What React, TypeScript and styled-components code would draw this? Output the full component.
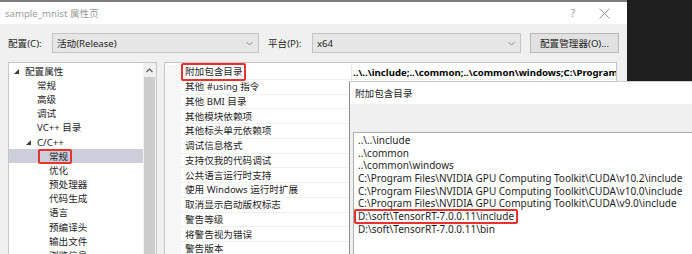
import React from "react";
import styled, { createGlobalStyle } from "styled-components";

const GlobalStyle = createGlobalStyle`
  html, body {
    margin: 0;
    padding: 0;
  }
  body {
    width: 692px;
    height: 254px;
    overflow: hidden;
    background: #1e1e1e;
    font-family: "Noto Sans", "Noto Sans CJK SC", sans-serif;
    font-size: 9.6px;
    color: #1e1e1e;
  }
`;

const treeItems: { label: string; depth: number; expander?: boolean; selected?: boolean }[] = [
  { label: "配置属性", depth: 0, expander: true },
  { label: "常规", depth: 1 },
  { label: "高级", depth: 1 },
  { label: "调试", depth: 1 },
  { label: "VC++ 目录", depth: 1 },
  { label: "C/C++", depth: 1, expander: true },
  { label: "常规", depth: 2, selected: true },
  { label: "优化", depth: 2 },
  { label: "预处理器", depth: 2 },
  { label: "代码生成", depth: 2 },
  { label: "语言", depth: 2 },
  { label: "预编译头", depth: 2 },
  { label: "输出文件", depth: 2 },
  { label: "浏览信息", depth: 2 },
];

const properties = [
  "附加包含目录",
  "其他 #using 指令",
  "其他 BMI 目录",
  "其他模块依赖项",
  "其他标头单元依赖项",
  "调试信息格式",
  "支持仅我的代码调试",
  "公共语言运行时支持",
  "使用 Windows 运行时扩展",
  "取消显示启动版权标志",
  "警告等级",
  "将警告视为错误",
  "警告版本",
];

const includeDirs = [
  "..\\..\\include",
  "..\\common",
  "..\\common\\windows",
  "C:\\Program Files\\NVIDIA GPU Computing Toolkit\\CUDA\\v10.2\\include",
  "C:\\Program Files\\NVIDIA GPU Computing Toolkit\\CUDA\\v10.0\\include",
  "C:\\Program Files\\NVIDIA GPU Computing Toolkit\\CUDA\\v9.0\\include",
  "D:\\soft\\TensorRT-7.0.0.11\\include",
  "D:\\soft\\TensorRT-7.0.0.11\\bin",
];

function Chevron() {
  return (
    <svg width="7" height="5" viewBox="0 0 7 5">
      <polyline points="0.5,1 3.5,4 6.5,1" fill="none" stroke="#8a8a8a" strokeWidth="1" />
    </svg>
  );
}

function Expander() {
  return (
    <svg width="5" height="5" viewBox="0 0 5 5">
      <polygon points="5,0 5,5 0,5" fill="#3c3c3c" />
    </svg>
  );
}

export default function App() {
  return (
    <>
      <GlobalStyle />
      <Desktop>
        <MainWindow>
          <TitleBar>
            <Title>sample_mnist 属性页</Title>
            <TitleButtons>
              <HelpGlyph>?</HelpGlyph>
              <svg width="11" height="11" viewBox="0 0 11 11">
                <path d="M0.5 0.5 L10.5 10.5 M10.5 0.5 L0.5 10.5" stroke="#9a9a9a" strokeWidth="1" />
              </svg>
            </TitleButtons>
          </TitleBar>

          <ConfigBar>
            <FieldLabel>配置(C):</FieldLabel>
            <Combo $width={207}>
              <span>活动(Release)</span>
              <Chevron />
            </Combo>
            <FieldLabel $gap={9}>平台(P):</FieldLabel>
            <Combo $width={209}>
              <span>x64</span>
              <Chevron />
            </Combo>
            <ManagerButton>配置管理器(O)...</ManagerButton>
          </ConfigBar>

          <Content>
            <TreePanel>
              <TreeList>
                {treeItems.map((item, i) => (
                  <TreeRow key={i} $depth={item.depth} $selected={item.selected}>
                    <ExpanderSlot>{item.expander && <Expander />}</ExpanderSlot>
                    <TreeLabel $marked={item.selected}>{item.label}</TreeLabel>
                  </TreeRow>
                ))}
              </TreeList>
              <ScrollBar>
                <ScrollArrow>
                  <svg width="7" height="5" viewBox="0 0 7 5">
                    <polyline points="0.5,4 3.5,1 6.5,4" fill="none" stroke="#555" strokeWidth="1.2" />
                  </svg>
                </ScrollArrow>
                <ScrollThumb />
              </ScrollBar>
            </TreePanel>

            <Grid>
              {properties.map((name, i) => (
                <GridRow key={i}>
                  <GridMargin />
                  <NameCell>
                    <NameText $marked={i === 0}>{name}</NameText>
                  </NameCell>
                  <ValueCell>
                    {i === 0 && "..\\..\\include;..\\common;..\\common\\windows;C:\\Program Files\\NVIDIA"}
                  </ValueCell>
                </GridRow>
              ))}
            </Grid>
          </Content>
        </MainWindow>

        <SubDialog>
          <SubTitleBar>附加包含目录</SubTitleBar>
          <SubBody>
            <DirList>
              {includeDirs.map((dir, i) => (
                <DirRow key={i}>
                  <DirText $marked={i === 6}>{dir}</DirText>
                </DirRow>
              ))}
            </DirList>
          </SubBody>
        </SubDialog>
      </Desktop>
    </>
  );
}

const Desktop = styled.div`
  position: relative;
  width: 692px;
  height: 254px;
  overflow: hidden;
  background: #1e1e1e;
`;

const MainWindow = styled.div`
  position: absolute;
  left: 0;
  top: 0;
  width: 627px;
  height: 254px;
  box-sizing: border-box;
  border-top: 2px solid #7d7d7d;
  background: #f0f0f0;
  display: flex;
  flex-direction: column;
`;

const TitleBar = styled.div`
  height: 22px;
  background: #fff;
  display: flex;
  align-items: center;
  justify-content: space-between;
  padding: 0 0 0 5px;
  flex-shrink: 0;
`;

const Title = styled.span`
  color: #9b9b9b;
  font-size: 9.6px;
`;

const TitleButtons = styled.div`
  display: flex;
  align-items: center;
  gap: 24px;
  padding-right: 17px;
`;

const HelpGlyph = styled.span`
  color: #9a9a9a;
  font-size: 10px;
`;

const ConfigBar = styled.div`
  margin-top: 9px;
  height: 20px;
  display: flex;
  align-items: center;
  padding-left: 8px;
  flex-shrink: 0;
`;

const FieldLabel = styled.span<{ $gap?: number }>`
  width: 44px;
  margin-left: ${(p) => p.$gap ?? 0}px;
  color: #1e1e1e;
`;

const Combo = styled.div<{ $width: number }>`
  width: ${(p) => p.$width}px;
  height: 20px;
  box-sizing: border-box;
  border: 1px solid #c4c4c4;
  background: #e6e6e6;
  display: flex;
  align-items: center;
  justify-content: space-between;
  padding: 0 5px 0 4px;
  color: #1e1e1e;
`;

const ManagerButton = styled.div`
  margin-left: 9px;
  width: 89px;
  height: 20px;
  box-sizing: border-box;
  border: 1px solid #b8b8b8;
  background: #e1e1e1;
  display: flex;
  align-items: center;
  justify-content: center;
  color: #1e1e1e;
`;

const Content = styled.div`
  margin-top: 9px;
  flex: 1;
  display: flex;
  padding-left: 8px;
  gap: 7px;
  min-height: 0;
`;

const TreePanel = styled.div`
  width: 149px;
  box-sizing: border-box;
  border: 1px solid #c6c6c6;
  border-bottom: none;
  background: #fff;
  display: flex;
`;

const TreeList = styled.div`
  flex: 1;
  padding-top: 1px;
  overflow: hidden;
`;

const TreeRow = styled.div<{ $depth: number; $selected?: boolean }>`
  height: 14.2px;
  display: flex;
  align-items: center;
  padding-left: ${(p) => 5 + p.$depth * 12}px;
  background: ${(p) => (p.$selected ? "#cccedb" : "transparent")};
  white-space: nowrap;
`;

const ExpanderSlot = styled.span`
  width: 11px;
  display: flex;
  align-items: center;
  padding-top: 1px;
`;

const TreeLabel = styled.span<{ $marked?: boolean }>`
  line-height: 11px;
  ${(p) =>
    p.$marked &&
    `
    border: 2px solid #e8322d;
    border-radius: 2px;
    margin-left: -11px;
    padding: 0 2px 0 9px;
  `}
`;

const ScrollBar = styled.div`
  width: 13px;
  display: flex;
  flex-direction: column;
  background: #f0f0f0;
`;

const ScrollArrow = styled.div`
  height: 14px;
  display: flex;
  align-items: center;
  justify-content: center;
  background: #f0f0f0;
`;

const ScrollThumb = styled.div`
  flex: 1;
  margin: 0 1px;
  background: #cdcdcd;
`;

const Grid = styled.div`
  width: 453px;
  box-sizing: border-box;
  border: 1px solid #c6c6c6;
  border-bottom: none;
  background: #fff;
  padding-top: 2px;
  overflow: hidden;
`;

const GridRow = styled.div`
  height: 14.75px;
  display: flex;
  align-items: center;
  box-shadow: inset 0 -1px 0 #f0f0f0;
`;

const GridMargin = styled.div`
  width: 16px;
  align-self: stretch;
  background: #f7f7f7;
`;

const NameCell = styled.div`
  width: 166px;
  padding-left: 4px;
  align-self: stretch;
  display: flex;
  align-items: center;
  border-right: 1px solid #e6e6e6;
  white-space: nowrap;
`;

const NameText = styled.span<{ $marked?: boolean }>`
  line-height: 12px;
  ${(p) =>
    p.$marked &&
    `
    border: 2px solid #e8322d;
    border-radius: 2px;
    margin-left: -4px;
    padding: 1px 1px 1px 2px;
  `}
`;

const ValueCell = styled.div`
  flex: 1;
  padding-left: 1px;
  font-weight: bold;
  color: #000;
  white-space: nowrap;
  overflow: hidden;
`;

const SubDialog = styled.div`
  position: absolute;
  left: 349px;
  top: 81px;
  right: 0;
  bottom: 0;
  border-left: 1px solid #8c8c8c;
  border-top: 1px solid #cfcfcf;
  background: #f0f0f0;
  display: flex;
  flex-direction: column;
`;

const SubTitleBar = styled.div`
  height: 22px;
  background: #fff;
  display: flex;
  align-items: center;
  padding-left: 5px;
  color: #1e1e1e;
`;

const SubBody = styled.div`
  flex: 1;
  padding: 28px 0 0 3px;
  overflow: hidden;
`;

const DirList = styled.div`
  width: 400px;
  height: 200px;
  box-sizing: border-box;
  border: 1px solid #adadad;
  background: #fff;
  padding-top: 1px;
`;

const DirRow = styled.div`
  height: 12.7px;
  display: flex;
  align-items: center;
  padding-left: 4px;
  white-space: nowrap;
  font-size: 10px;
`;

const DirText = styled.span<{ $marked?: boolean }>`
  line-height: 11px;
  color: #1e1e1e;
  ${(p) =>
    p.$marked &&
    `
    border: 2px solid #e8322d;
    border-radius: 2px;
    margin-left: -4px;
    padding: 0 2px;
  `}
`;
